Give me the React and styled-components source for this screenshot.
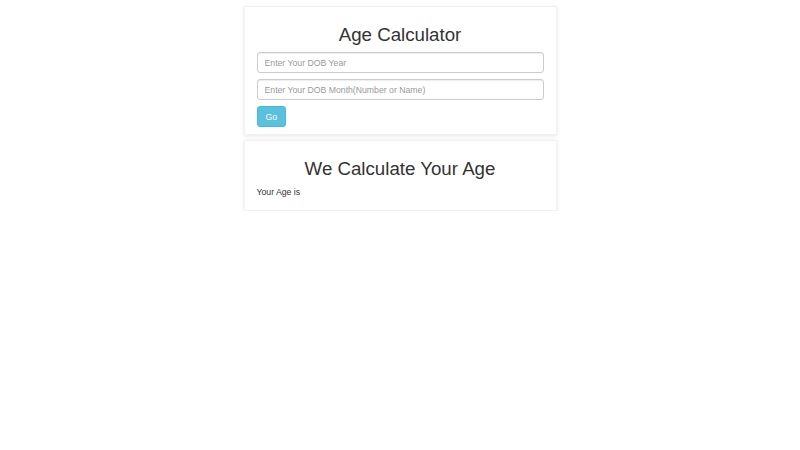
import React, { useState } from "react";
import styled, { createGlobalStyle } from "styled-components";

const GlobalStyle = createGlobalStyle`
  html, body {
    margin: 0;
    padding: 0;
    background: #fff;
  }
  body {
    font-family: "Liberation Sans", Arial, Helvetica, sans-serif;
    font-size: 8.7px;
    line-height: 1.43;
    color: #333;
  }
  * {
    box-sizing: border-box;
  }
`;

const Page = styled.div`
  display: flex;
  flex-direction: column;
  align-items: center;
  gap: 5px;
  padding-top: 6px;
`;

const Card = styled.div`
  width: 313px;
  background: #fff;
  border: 1px solid #f1f1f1;
  box-shadow: 0 1px 4px rgba(0, 0, 0, 0.1);
  padding: 0 12px ${(p) => p.$bottom || "7px"};
`;

const Title = styled.h2`
  font-size: 18.7px;
  font-weight: 500;
  line-height: 21px;
  text-align: center;
  margin: 17px 0 ${(p) => p.$gap || "7px"};
  color: #333;
`;

const Form = styled.form`
  display: flex;
  flex-direction: column;
  align-items: flex-start;
  gap: 6px;
`;

const Input = styled.input`
  width: 100%;
  height: 21px;
  padding: 0 7px;
  font-family: inherit;
  font-size: 8.7px;
  color: #555;
  border: 1px solid #ccc;
  border-radius: 3px;
  box-shadow: inset 0 1px 1px rgba(0, 0, 0, 0.075);
  outline: none;

  &::placeholder {
    color: #999;
  }
`;

const Button = styled.button`
  height: 21px;
  padding: 0 8px;
  font-family: inherit;
  font-size: 8.7px;
  color: #fff;
  background: #5bc0de;
  border: 1px solid #46b8da;
  border-radius: 3px;
  cursor: pointer;
`;

const Result = styled.p`
  margin: 0;
  line-height: 13px;
`;

const monthNames = [
  "january", "february", "march", "april", "may", "june",
  "july", "august", "september", "october", "november", "december",
];

function parseMonth(value) {
  const n = parseInt(value, 10);
  if (!isNaN(n)) return n;
  const idx = monthNames.findIndex((m) => m.startsWith(value.trim().toLowerCase().slice(0, 3)));
  return idx >= 0 ? idx + 1 : NaN;
}

export default function App() {
  const [year, setYear] = useState("");
  const [month, setMonth] = useState("");
  const [age, setAge] = useState("");

  const calculate = (e) => {
    e.preventDefault();
    const y = parseInt(year, 10);
    const m = parseMonth(month);
    if (isNaN(y) || isNaN(m)) return;
    const now = new Date();
    let years = now.getFullYear() - y;
    let months = now.getMonth() + 1 - m;
    if (months < 0) {
      years -= 1;
      months += 12;
    }
    setAge(`${years} years ${months} months`);
  };

  return (
    <>
      <GlobalStyle />
      <Page>
        <Card>
          <Title>Age Calculator</Title>
          <Form onSubmit={calculate}>
            <Input
              placeholder="Enter Your DOB Year"
              value={year}
              onChange={(e) => setYear(e.target.value)}
            />
            <Input
              placeholder="Enter Your DOB Month(Number or Name)"
              value={month}
              onChange={(e) => setMonth(e.target.value)}
            />
            <Button type="submit">Go</Button>
          </Form>
        </Card>
        <Card $bottom="11px">
          <Title $gap="7px">We Calculate Your Age</Title>
          <Result>Your Age is {age}</Result>
        </Card>
      </Page>
    </>
  );
}
